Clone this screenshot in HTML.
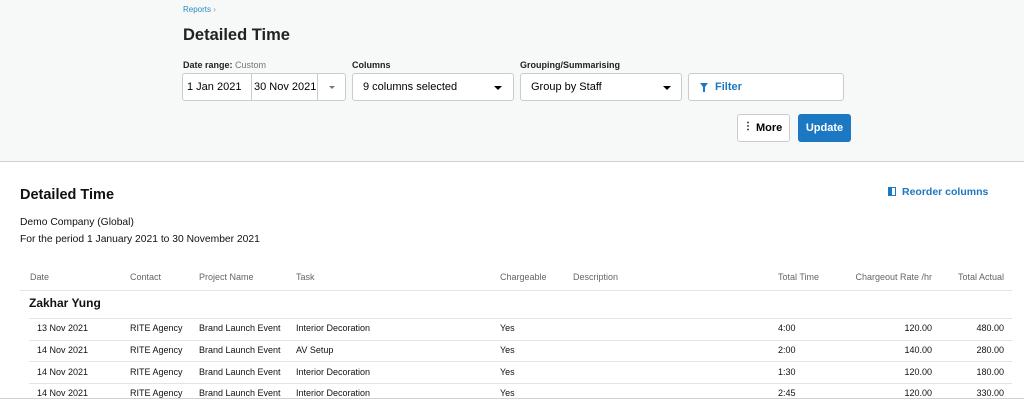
<!DOCTYPE html>
<html><head><style>
*{margin:0;padding:0;box-sizing:border-box}
body{width:1024px;height:402px;overflow:hidden;font-family:"Liberation Sans",Arial,sans-serif;background:#fff;position:relative;color:#000}
.a{position:absolute;white-space:nowrap}
#top{position:absolute;left:0;top:0;width:1024px;height:162px;background:#f7f8f8;border-bottom:1px solid #cfd2d4}
.box{position:absolute;background:#fff;border:1px solid #c9ccce;border-radius:3px;height:28px;top:73px;font-size:11px;line-height:26px}
.lbl{font-size:9px;font-weight:bold;color:#222;top:60px}
.caret{position:absolute;width:0;height:0;border-left:4px solid transparent;border-right:4px solid transparent;border-top:4px solid #000;top:12px}
.h{font-size:9px;color:#666;top:272px}
.r{font-size:9px;color:#111}
.line{position:absolute;height:1px;background:#e2e4e6}
</style></head><body>
<div id="top"></div>
<div class="a" style="left:183px;top:5px;font-size:8px;color:#2a8ac7">Reports <span style="color:#999">›</span></div>
<div class="a" style="left:183px;top:26px;font-size:16.5px;font-weight:bold;color:#222">Detailed Time</div>
<div class="a lbl" style="left:183px">Date range: <span style="font-weight:normal;color:#777">Custom</span></div>
<div class="a lbl" style="left:352px">Columns</div>
<div class="a lbl" style="left:520px">Grouping/Summarising</div>
<div class="box" style="left:182px;width:164px">
 <span class="a" style="left:4px">1 Jan 2021</span>
 <div class="a" style="left:68px;top:0;width:1px;height:26px;background:#c9ccce"></div>
 <span class="a" style="left:71px">30 Nov 2021</span>
 <div class="a" style="left:134px;top:0;width:1px;height:26px;background:#c9ccce"></div>
 <div class="caret" style="left:146px;border-top-color:#777;border-left-width:3px;border-right-width:3px;border-top-width:3px"></div>
</div>
<div class="box" style="left:352px;width:162px"><span class="a" style="left:10px">9 columns selected</span><div class="caret" style="left:141px"></div></div>
<div class="box" style="left:520px;width:162px"><span class="a" style="left:10px">Group by Staff</span><div class="caret" style="left:142px"></div></div>
<div class="box" style="left:688px;width:156px;color:#1c78c3;font-weight:bold">
 <svg class="a" style="left:11px;top:9px" width="8" height="9" viewBox="0 0 8 9"><path d="M0 0H8L5 4V9H3V4Z" fill="#1c78c3"/></svg>
 <span class="a" style="left:26px">Filter</span></div>
<div class="box" style="left:737px;top:114px;width:53px;height:28px;font-weight:bold;font-size:11px"><span class="a" style="left:5px;top:-1px;font-size:10px">⋮</span><span class="a" style="left:18px">More</span></div>
<div class="a" style="left:798px;top:114px;width:53px;height:28px;background:#1c78c3;border-radius:3px;color:#fff;font-weight:bold;font-size:11px;line-height:28px;text-align:center">Update</div>

<div class="a" style="left:20px;top:187px;font-size:14.5px;font-weight:bold;color:#111">Detailed Time</div>
<div class="a" style="left:888px;top:187px;width:8px;height:9px;border:1.5px solid #1c78c3;border-left-width:4px"></div>
<div class="a" style="left:902px;top:186px;font-size:10.5px;font-weight:bold;color:#1c78c3">Reorder columns</div>
<div class="a" style="left:20px;top:217px;font-size:10.3px;color:#111">Demo Company (Global)</div>
<div class="a" style="left:20px;top:234px;font-size:10.3px;color:#111">For the period 1 January 2021 to 30 November 2021</div>

<div class="a h" style="left:30px">Date</div>
<div class="a h" style="left:130px">Contact</div>
<div class="a h" style="left:199px">Project Name</div>
<div class="a h" style="left:296px">Task</div>
<div class="a h" style="left:500px">Chargeable</div>
<div class="a h" style="left:573px">Description</div>
<div class="a h" style="left:778px">Total Time</div>
<div class="a h" style="left:832px;width:100px;text-align:right">Chargeout Rate /hr</div>
<div class="a h" style="left:904px;width:100px;text-align:right">Total Actual</div>
<div class="line" style="left:20px;width:992px;top:290px"></div>
<div class="a" style="left:29px;top:296px;font-size:12px;font-weight:bold;color:#111">Zakhar Yung</div>
<div class="line" style="left:29px;width:983px;top:318px"></div>
<div class="line" style="left:29px;width:983px;top:340px"></div>
<div class="line" style="left:29px;width:983px;top:361px"></div>
<div class="line" style="left:29px;width:983px;top:383px"></div>

<div class="a r" style="left:37px;top:323px">13 Nov 2021</div><div class="a r" style="left:130px;top:323px">RITE Agency</div><div class="a r" style="left:199px;top:323px">Brand Launch Event</div><div class="a r" style="left:296px;top:323px">Interior Decoration</div><div class="a r" style="left:500px;top:323px">Yes</div><div class="a r" style="left:778px;top:323px">4:00</div><div class="a r" style="left:832px;width:100px;text-align:right;top:323px">120.00</div><div class="a r" style="left:904px;width:100px;text-align:right;top:323px">480.00</div>
<div class="a r" style="left:37px;top:345px">14 Nov 2021</div><div class="a r" style="left:130px;top:345px">RITE Agency</div><div class="a r" style="left:199px;top:345px">Brand Launch Event</div><div class="a r" style="left:296px;top:345px">AV Setup</div><div class="a r" style="left:500px;top:345px">Yes</div><div class="a r" style="left:778px;top:345px">2:00</div><div class="a r" style="left:832px;width:100px;text-align:right;top:345px">140.00</div><div class="a r" style="left:904px;width:100px;text-align:right;top:345px">280.00</div>
<div class="a r" style="left:37px;top:367px">14 Nov 2021</div><div class="a r" style="left:130px;top:367px">RITE Agency</div><div class="a r" style="left:199px;top:367px">Brand Launch Event</div><div class="a r" style="left:296px;top:367px">Interior Decoration</div><div class="a r" style="left:500px;top:367px">Yes</div><div class="a r" style="left:778px;top:367px">1:30</div><div class="a r" style="left:832px;width:100px;text-align:right;top:367px">120.00</div><div class="a r" style="left:904px;width:100px;text-align:right;top:367px">180.00</div>
<div class="a r" style="left:37px;top:388px">14 Nov 2021</div><div class="a r" style="left:130px;top:388px">RITE Agency</div><div class="a r" style="left:199px;top:388px">Brand Launch Event</div><div class="a r" style="left:296px;top:388px">Interior Decoration</div><div class="a r" style="left:500px;top:388px">Yes</div><div class="a r" style="left:778px;top:388px">2:45</div><div class="a r" style="left:832px;width:100px;text-align:right;top:388px">120.00</div><div class="a r" style="left:904px;width:100px;text-align:right;top:388px">330.00</div>
<div class="a" style="left:0;width:1024px;top:398px;height:1px;background:#cfd2d4"></div>
<div class="a" style="left:0;width:1024px;top:399px;height:3px;background:#fff"></div>
</body></html>
